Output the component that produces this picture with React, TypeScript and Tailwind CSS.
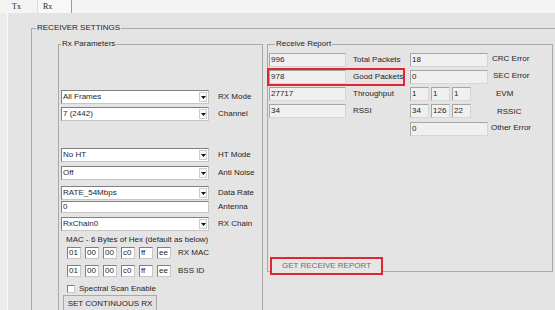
import type { ReactNode } from "react";

// sunken win32 style edit frame
const sunk =
  "border border-t-[#7f7f7f] border-l-[#7f7f7f] border-r-[#c6c6c6] border-b-[#c6c6c6]";
const roBox =
  "bg-[#f0f0f0] border border-t-[#a6a6a6] border-l-[#a6a6a6] border-r-[#d6d6d6] border-b-[#d6d6d6]";

function Arrow() {
  return (
    <span className="ml-auto mr-[1px] w-[8px] h-[10px] flex items-center justify-center bg-[#f8f8f8] border border-[#cccccc]">
      <svg width="5" height="3" viewBox="0 0 5 3">
        <path d="M0 0h5L2.5 3z" fill="#111" />
      </svg>
    </span>
  );
}

function Combo({ value, label, className }: { value: string; label: string; className: string }) {
  return (
    <div className={`flex items-center h-[14px] ${className}`}>
      <div className={`w-[148px] h-[14px] shrink-0 bg-white flex items-center pl-[1px] ${sunk}`}>
        <span>{value}</span>
        <Arrow />
      </div>
      <span className="ml-[9px] whitespace-nowrap">{label}</span>
    </div>
  );
}

function MacRow({ values, label, className }: { values: string[]; label: string; className: string }) {
  return (
    <div className={`flex items-center h-[12px] ml-[8px] ${className}`}>
      <div className="flex gap-[4px]">
        {values.map((v, i) => (
          <div key={i} className={`w-[14px] h-[12px] bg-white pl-[1px] flex items-center ${sunk}`}>
            {v}
          </div>
        ))}
      </div>
      <span className="ml-[7px]">{label}</span>
    </div>
  );
}

function Ro({ children, w }: { children: ReactNode; w: string }) {
  return <div className={`${w} h-[14px] shrink-0 pl-[1px] flex items-center ${roBox}`}>{children}</div>;
}

function App() {
  return (
    <div className="w-[555px] h-[310px] overflow-hidden bg-[#e4e4e4] text-[8px] leading-[10px] text-[#1e1e1e] font-['Liberation_Sans',Arial,sans-serif]">
      {/* tabs */}
      <div className="h-[13px] bg-[#f4f4f4] flex pl-[4px] font-['Liberation_Serif',serif] text-[8px]">
        <div className="w-[33px] pl-[8px] leading-[13px]">Tx</div>
        <div className="w-[35px] pl-[5px] leading-[13px] bg-[#f8f8f8] border-l border-r border-l-[#dddddd] border-r-[#9c9c9c]">
          Rx
        </div>
      </div>

      <div className="flex h-[297px]">
        <div className="w-[7px] shrink-0 bg-[#ececec]" />
        <div className="flex-1 min-w-0 border-l border-[#fbfbfb] pt-[10px]">
          <fieldset className="ml-[23px] w-[600px] h-[400px] border border-[#a9a9a9]">
            <legend className="ml-[4px] px-[1px] leading-[10px]">RECEIVER SETTINGS</legend>

            <div className="flex mt-[6px] ml-[26px]">
              {/* Rx Parameters */}
              <fieldset className="w-[205px] h-[300px] shrink-0 min-w-0 border border-[#a9a9a9]">
                <legend className="ml-[2px] px-[1px] leading-[10px]">Rx Parameters</legend>
                <div className="ml-[2px]">
                  <Combo value="All Frames" label="RX Mode" className="mt-[41px]" />
                  <Combo value="7 (2442)" label="Channel" className="mt-[3px]" />
                  <Combo value="No HT" label="HT Mode" className="mt-[27px]" />
                  <Combo value="Off" label="Anti Noise" className="mt-[4px]" />
                  <Combo value="RATE_54Mbps" label="Data Rate" className="mt-[6px]" />
                  <div className="flex items-center h-[12px] mt-[1px]">
                    <div className={`w-[148px] h-[12px] shrink-0 bg-white pl-[1px] flex items-center ${sunk}`}>0</div>
                    <span className="ml-[9px]">Antenna</span>
                  </div>
                  <Combo value="RxChain0" label="RX Chain" className="mt-[4px]" />
                </div>
                <div className="mt-[4px] ml-[7px] whitespace-nowrap">MAC - 6 Bytes of Hex (default as below)</div>
                <MacRow values={["01", "00", "00", "c0", "ff", "ee"]} label="RX MAC" className="mt-[2px]" />
                <MacRow values={["01", "00", "00", "c0", "ff", "ee"]} label="BSS ID" className="mt-[6px]" />
                <div className="flex items-center h-[10px] mt-[7px] ml-[8px]">
                  <span className={`w-[8px] h-[8px] bg-white ${sunk}`} />
                  <span className="ml-[4px]">Spectral Scan Enable</span>
                </div>
                <button className="mt-[1px] ml-[4px] w-[94px] h-[17px] bg-[#e1e1e1] border border-[#a8a8a8] text-[8px] leading-[10px] flex items-center justify-center">
                  SET CONTINUOUS RX
                </button>
              </fieldset>

              {/* Receive Report */}
              <fieldset className="ml-[4px] w-[286px] h-[233px] shrink-0 min-w-0 border border-[#a9a9a9]">
                <legend className="ml-[7px] px-[1px] leading-[10px]">Receive Report</legend>
                <div className="flex mt-[4px] pl-[1px]">
                  <div className="w-[141px] shrink-0 flex flex-col gap-[3px]">
                    <div className="flex items-center">
                      <Ro w="w-[77px]">996</Ro>
                      <span className="ml-[7px]">Total Packets</span>
                    </div>
                    <div className="relative flex items-center">
                      <Ro w="w-[77px]">978</Ro>
                      <span className="ml-[7px]">Good Packets</span>
                      <span className="absolute left-[-2px] top-[-2px] w-[138px] h-[18px] border-2 border-[#e3262d]" />
                    </div>
                    <div className="flex items-center">
                      <Ro w="w-[77px]">27717</Ro>
                      <span className="ml-[7px]">Throughput</span>
                    </div>
                    <div className="flex items-center">
                      <Ro w="w-[77px]">34</Ro>
                      <span className="ml-[7px]">RSSI</span>
                    </div>
                  </div>
                  <div className="flex flex-col gap-[3px]">
                    <div className="flex items-center">
                      <Ro w="w-[78px]">18</Ro>
                      <span className="ml-[4px] -mt-[3px]">CRC Error</span>
                    </div>
                    <div className="flex items-center">
                      <Ro w="w-[78px]">0</Ro>
                      <span className="ml-[5px] -mt-[2px]">SEC Error</span>
                    </div>
                    <div className="flex items-center">
                      <div className="w-[78px] shrink-0 flex gap-[2px]">
                        <Ro w="w-[19px]">1</Ro>
                        <Ro w="w-[19px]">1</Ro>
                        <Ro w="w-[19px]">1</Ro>
                      </div>
                      <span className="ml-[8px]">EVM</span>
                    </div>
                    <div className="flex items-center">
                      <div className="w-[78px] shrink-0 flex gap-[2px]">
                        <Ro w="w-[19px]">34</Ro>
                        <Ro w="w-[19px]">126</Ro>
                        <Ro w="w-[19px]">22</Ro>
                      </div>
                      <span className="ml-[9px] mt-[2px]">RSSIC</span>
                    </div>
                    <div className="flex items-center mt-[1px]">
                      <Ro w="w-[78px]">0</Ro>
                      <span className="ml-[3px] -mt-[2px] whitespace-nowrap">Other Error</span>
                    </div>
                  </div>
                </div>
                <button className="mt-[121px] ml-[2px] w-[113px] h-[18px] border-2 border-[#e3262d] bg-[#e6e6e6] text-[#6e6e6e] text-[8px] leading-[10px] flex items-center justify-center">
                  GET RECEIVE REPORT
                </button>
              </fieldset>
            </div>
          </fieldset>
        </div>
      </div>
    </div>
  );
}

export default App;
